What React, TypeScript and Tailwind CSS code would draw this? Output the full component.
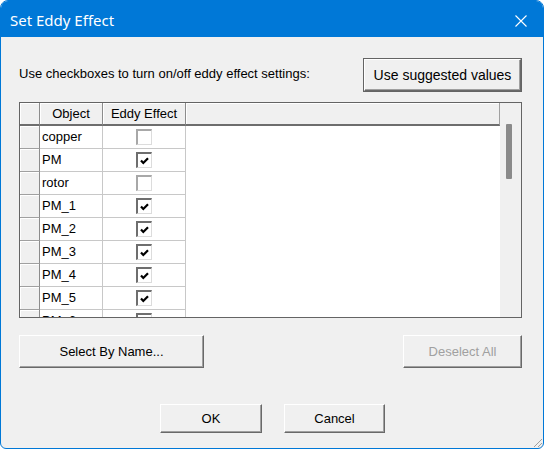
import React from 'react';

const rows: { name: string; on: boolean }[] = [
  { name: 'copper', on: false },
  { name: 'PM', on: true },
  { name: 'rotor', on: false },
  { name: 'PM_1', on: true },
  { name: 'PM_2', on: true },
  { name: 'PM_3', on: true },
  { name: 'PM_4', on: true },
  { name: 'PM_5', on: true },
  { name: 'PM_6', on: true },
];

const Button: React.FC<{ label: string; className?: string; disabled?: boolean; isDefault?: boolean }> = ({
  label,
  className = '',
  disabled,
  isDefault,
}) => {
  const inner = (
    <div
      className={`flex h-full w-full items-center justify-center border-t border-l border-white border-r border-b border-r-[#696969] border-b-[#696969] bg-[#f0f0f0] shadow-[inset_-1px_-1px_0_#a0a0a0] ${disabled ? 'text-[#a0a0a0]' : 'text-black'}`}
    >
      {label}
    </div>
  );
  if (isDefault) {
    return <div className={`border border-[#646464] ${className}`}>{inner}</div>;
  }
  return <div className={className}>{inner}</div>;
};

const CheckBox: React.FC<{ checked: boolean }> = ({ checked }) => (
  <div
    className={`flex h-[16px] w-[16px] items-center justify-center border-t-2 border-l-2 border-r border-b border-r-[#dcdcdc] border-b-[#dcdcdc] bg-white ${checked ? 'border-t-[#6e6e6e] border-l-[#6e6e6e]' : 'border-t-[#a8a8a8] border-l-[#a8a8a8]'}`}
  >
    {checked && (
      <svg width="9" height="8" viewBox="0 0 9 8">
        <path d="M1 3.5 L3.3 6 L8 1.2" stroke="#000" strokeWidth="2.2" fill="none" />
      </svg>
    )}
  </div>
);

export default function App() {
  return (
    <div className="h-[449px] w-[544px] bg-white">
      <div
        className="flex h-full w-full flex-col overflow-hidden rounded-t-[8px] rounded-b-[6px] border border-[#0078d7] bg-[#f0f0f0] text-[13px] text-black"
        style={{ fontFamily: '"Liberation Sans", Arial, sans-serif' }}
      >
        {/* title bar */}
        <div className="flex h-[36px] shrink-0 items-center justify-between bg-[#0078d7] pl-[9px] pr-[16px] text-white">
          <span className="mt-[2px] text-[15px]" style={{ fontFamily: '"Noto Sans", "Open Sans", sans-serif' }}>
            Set Eddy Effect
          </span>
          <svg width="12" height="12" viewBox="0 0 12 12" className="mt-[3px]">
            <path d="M0.5 0.5 L11.5 11.5 M11.5 0.5 L0.5 11.5" stroke="#fff" strokeWidth="1.1" />
          </svg>
        </div>

        <div className="flex flex-1 flex-col pl-[18px] pr-[21px]">
          <div className="mt-[21px] flex h-[34px] items-center justify-between">
            <span className="mt-[-2px]">Use checkboxes to turn on/off eddy effect settings:</span>
            <Button label="Use suggested values" isDefault className="h-[34px] w-[159px] text-[14px]" />
          </div>

          {/* grid */}
          <div className="mt-[10px] flex h-[216px] border border-[#646464] bg-white">
            <div className="flex flex-1 flex-col overflow-hidden">
              <div className="flex h-[23px] shrink-0 bg-[#f0f0f0]">
                {[
                  { w: 'w-[20px]', t: '' },
                  { w: 'w-[63px]', t: 'Object' },
                  { w: 'w-[83px]', t: 'Eddy Effect' },
                ].map((h, i) => (
                  <div
                    key={i}
                    className={`${h.w} flex items-center justify-center border-r border-b-2 border-r-[#8c8c8c] border-b-[#6d6d6d] shadow-[inset_1px_1px_0_#ffffff]`}
                  >
                    {h.t}
                  </div>
                ))}
                <div className="flex-1 border-r border-b-2 border-r-[#a0a0a0] border-b-[#6d6d6d] shadow-[inset_1px_1px_0_#ffffff]" />
              </div>
              {rows.map((r) => (
                <div key={r.name} className="flex h-[23px] shrink-0">
                  <div className="w-[20px] border-r border-b border-r-[#8c8c8c] border-b-[#a0a0a0] bg-[#f0f0f0] shadow-[inset_1px_1px_0_#ffffff]" />
                  <div className="flex w-[63px] items-center border-r border-b border-[#c8c8c8] pl-[2px]">{r.name}</div>
                  <div className="flex w-[83px] items-center justify-center border-r border-b border-[#c8c8c8]">
                    <CheckBox checked={r.on} />
                  </div>
                  <div className="flex-1" />
                </div>
              ))}
            </div>
            {/* scrollbar */}
            <div className="w-[21px] shrink-0 bg-[#f0f0f0] pt-[21px] pl-[6px]">
              <div className="h-[55px] w-[6px] rounded-[1px] bg-[#8a8a8a]" />
            </div>
          </div>

          <div className="mt-[17px] flex justify-between">
            <Button label="Select By Name..." className="h-[33px] w-[185px]" />
            <Button label="Deselect All" disabled className="h-[33px] w-[119px]" />
          </div>

          <div className="mt-[36px] flex justify-center gap-[22px] pl-[4px]">
            <Button label="OK" className="h-[29px] w-[102px]" />
            <Button label="Cancel" className="h-[29px] w-[101px]" />
          </div>

          <div className="relative flex-1">
            <svg width="12" height="12" viewBox="0 0 12 12" className="absolute right-[-21px] bottom-0">
              <path d="M11 3 L3 11 M11 7 L7 11 M11 10 L10 11" stroke="#a0a0a0" strokeWidth="1" />
            </svg>
          </div>
        </div>
      </div>
    </div>
  );
}
